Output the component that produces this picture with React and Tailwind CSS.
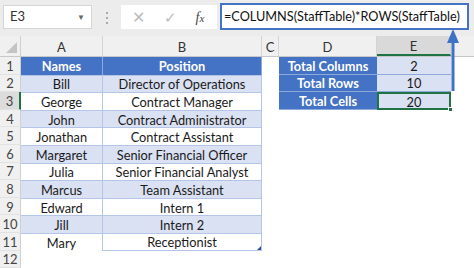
import React from "react";

const staff = [
  ["Bill", "Director of Operations"],
  ["George", "Contract Manager"],
  ["John", "Contract Administrator"],
  ["Jonathan", "Contract Assistant"],
  ["Margaret", "Senior Financial Officer"],
  ["Julia", "Senior Financial Analyst"],
  ["Marcus", "Team Assistant"],
  ["Edward", "Intern 1"],
  ["Jill", "Intern 2"],
  ["Mary", "Receptionist"],
];

const totals = [
  ["Total Columns", "2"],
  ["Total Rows", "10"],
  ["Total Cells", "20"],
];

const cols = "grid grid-cols-[21px_82px_159px_17px_98px_74px_1fr] grid-rows-[100%] leading-none";

function RowHead({ n, active }) {
  return (
    <div
      className={
        "flex items-center justify-center pt-[2px] text-[13px] text-[#444] border-b border-[#e2e2e2] " +
        (active
          ? "bg-[#dcdcdc] border-r-2 border-r-[#217346]"
          : "bg-[#f0f0f0] border-r border-r-[#cfcfcf]")
      }
    >
      {n}
    </div>
  );
}

export default function App() {
  return (
    <div
      className="relative w-[474px] h-[268px] overflow-hidden bg-white text-[#1a1a1a]"
      style={{ fontFamily: "Lato, 'Liberation Sans', sans-serif" }}
    >
      {/* formula bar */}
      <div className="h-[36px] bg-[#ececec] flex items-start">
        <div className="ml-[3px] mt-[5px] w-[89px] h-[24px] bg-white border border-[#d6d6d6] flex items-center justify-between px-[6px] text-[13px] text-[#333]">
          <span>E3</span>
          <span className="text-[8px] text-[#666]">▼</span>
        </div>
        <div className="w-[29px] h-[30px] flex flex-col items-center justify-center gap-[3px] mt-[3px]">
          <span className="w-[2px] h-[2px] bg-[#aaa]" />
          <span className="w-[2px] h-[2px] bg-[#aaa]" />
          <span className="w-[2px] h-[2px] bg-[#aaa]" />
        </div>
        <div className="mt-[5px] w-[96px] h-[24px] bg-white flex items-center text-[#bbb]">
          <span className="w-[34px] text-center text-[16px] leading-none">✕</span>
          <span className="w-[30px] text-center text-[15px] leading-none">✓</span>
          <span
            className="w-[30px] text-center text-[14px] italic text-[#444]"
            style={{ fontFamily: "'Liberation Serif', serif" }}
          >
            f<span className="text-[11px]">x</span>
          </span>
        </div>
        <div className="ml-[3px] mt-[3px] w-[249px] h-[27px] bg-white border-2 border-[#4472c4] flex items-center pl-[2px] text-[12.7px] text-[#111] whitespace-nowrap">
          =COLUMNS(StaffTable)*ROWS(StaffTable)
        </div>
      </div>

      {/* column headers */}
      <div className={cols + " h-[21px] bg-[#f0f0f0] text-[13px] text-[#333] border-b border-[#c8c8c8]"}>
        <div className="relative border-r border-[#cfcfcf]">
          <div className="absolute right-[3px] bottom-[3px] w-0 h-0 border-l-[11px] border-l-transparent border-b-[11px] border-b-[#c4c4c4]" />
        </div>
        {["A", "B", "C", "D"].map((c) => (
          <div key={c} className="flex items-center justify-center pt-[2px] border-r border-[#d4d4d4]">
            {c}
          </div>
        ))}
        <div className="flex items-center justify-center pt-[2px] bg-[#d9d9d9] border-r border-[#d4d4d4] border-b-2 border-b-[#217346]">
          E
        </div>
        <div />
      </div>

      {/* rows */}
      <div className="text-[12.8px]">
        <div className={cols + " h-[17.6px]"}>
          <RowHead n={1} />
          <div className="bg-[#4472c4] text-white font-bold flex items-center justify-center pt-[2px] border-r border-[#8eaadb]">
            Names
          </div>
          <div className="bg-[#4472c4] text-white font-bold flex items-center justify-center pt-[2px] border-r border-[#8eaadb]">
            Position
          </div>
          <div />
          <div className="bg-[#4472c4] text-white font-bold flex items-center justify-center pt-[2px] border-b border-[#8eaadb]">
            {totals[0][0]}
          </div>
          <div className="bg-[#d9e1f2] flex items-center justify-center pt-[2px] border-b border-[#8eaadb]">
            {totals[0][1]}
          </div>
          <div />
        </div>
        {staff.map(([name, pos], i) => {
          const band = i % 2 === 0 ? "bg-[#d9e1f2]" : "bg-white";
          const total = totals[i + 1];
          return (
            <div key={name} className={cols + " h-[17.6px]"}>
              <RowHead n={i + 2} active={i === 1} />
              <div className={band + " flex items-center justify-center pt-[2px] border-t border-r border-[#b4c6e7]"}>
                {name}
              </div>
              <div className={band + " relative flex items-center justify-center pt-[2px] border-t border-r border-[#b4c6e7] " + (i === 9 ? "border-b" : "")}>
                {pos}
                {i === 9 && (
                  <div className="absolute right-0 bottom-0 w-0 h-0 border-l-[4px] border-l-transparent border-b-[4px] border-b-[#2f528f]" />
                )}
              </div>
              <div />
              {total ? (
                <div className="bg-[#4472c4] text-white font-bold flex items-center justify-center pt-[2px] border-b border-[#8eaadb]">
                  {total[0]}
                </div>
              ) : (
                <div />
              )}
              {total ? (
                <div
                  className={
                    "relative bg-[#d9e1f2] flex items-center justify-center pt-[2px] " +
                    (i === 1 ? "border-2 border-[#217346]" : "border-b border-[#8eaadb]")
                  }
                >
                  {total[1]}
                  {i === 1 && (
                    <div className="absolute right-[-4px] bottom-[-4px] w-[5px] h-[5px] bg-[#217346] border border-white" />
                  )}
                </div>
              ) : (
                <div />
              )}
              <div />
            </div>
          );
        })}
        <div className={cols + " h-[17.6px]"}>
          <RowHead n={12} />
        </div>
      </div>

      {/* arrow */}
      <svg className="absolute left-[445px] top-[29px]" width="16" height="64" viewBox="0 0 16 64">
        <polygon points="8,0 14,14 2,14" fill="#3f72c6" />
        <rect x="6.5" y="12" width="3" height="50" fill="#3f72c6" />
      </svg>
    </div>
  );
}
